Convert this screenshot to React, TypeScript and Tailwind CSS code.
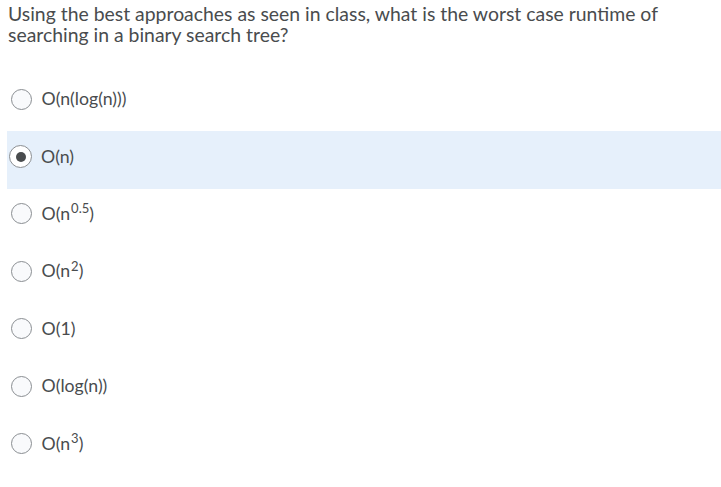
const sup = 'text-[13px] ml-[1px]';

const options = [
  { id: 1, label: <>O(n(log(n)))</> },
  { id: 2, label: <>O(n)</> },
  { id: 3, label: <>O(n<sup className={sup}>0.5</sup>)</> },
  { id: 4, label: <>O(n<sup className={sup}>2</sup>)</> },
  { id: 5, label: <>O(1)</> },
  { id: 6, label: <>O(log(n))</> },
  { id: 7, label: <>O(n<sup className={sup}>3</sup>)</> },
];

const selected = 2;

function Radio({ checked }: { checked: boolean }) {
  if (checked) {
    return (
      <span className="w-[23px] h-[23px] rounded-full border-[1.5px] border-[#8a8e92] bg-white flex items-center justify-center flex-shrink-0">
        <span className="w-[10px] h-[10px] rounded-full bg-[#494c4e]" />
      </span>
    );
  }
  return (
    <span className="w-[21px] h-[21px] rounded-full border border-[#8a8e92] bg-[#f9fafc] flex-shrink-0" />
  );
}

export default function App() {
  return (
    <div className="w-[721px] h-[487px] bg-white text-[#494c4e] overflow-hidden" style={{ fontFamily: 'Lato, "Open Sans", sans-serif' }}>
      <p className="pt-[3px] pl-[8px] pr-[40px] text-[19.4px] leading-[21px]">
        Using the best approaches as seen in class, what is the worst case runtime of searching in a binary search tree?
      </p>
      <div className="mt-[29px] flex flex-col">
        {options.map((opt) => {
          const isSel = opt.id === selected;
          return (
            <label
              key={opt.id}
              className={`ml-[7px] h-[57.4px] flex items-center gap-[9px] pb-[7px] ${isSel ? 'bg-[#e6f0fb] pl-[2px]' : 'pl-[3.5px]'}`}
            >
              <Radio checked={isSel} />
              <span className={`text-[17.7px] leading-[20px] whitespace-nowrap ${isSel ? '' : 'ml-[1px]'}`}>{opt.label}</span>
            </label>
          );
        })}
      </div>
    </div>
  );
}
